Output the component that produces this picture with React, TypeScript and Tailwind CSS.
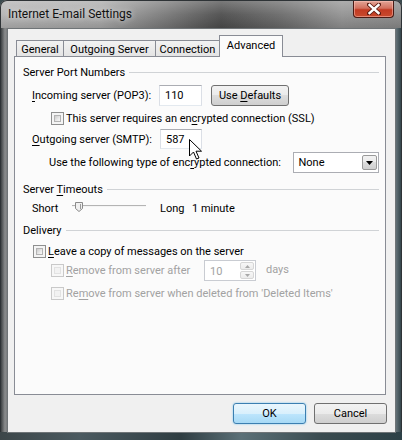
import React from "react";

function Key({ children }: { children: React.ReactNode }) {
  return <span className="underline underline-offset-[2px] decoration-[1px]">{children}</span>;
}

function Checkbox({ disabled }: { disabled?: boolean }) {
  return (
    <span
      className={`flex w-[13px] h-[13px] shrink-0 border p-[2px] ${
        disabled ? "border-[#c9c9c9] bg-[#f7f7f7]" : "border-[#8e8f8f] bg-[#f4f4f4]"
      }`}
    >
      <span
        className={`block w-full h-full border ${
          disabled
            ? "border-[#e2e2e2] bg-[#f2f2f2]"
            : "border-[#b3b3b3] bg-[linear-gradient(135deg,#cbcbcb_0%,#e9e9e9_60%,#f8f8f8_100%)]"
        }`}
      />
    </span>
  );
}

function GroupHeading({ children, mt }: { children: React.ReactNode; mt: string }) {
  return (
    <div className={`flex items-center h-[16px] ${mt}`}>
      <span>{children}</span>
      <span className="flex-1 h-px bg-[#d0d3d6] ml-[4px]" />
    </div>
  );
}

function TextBox({ value, w }: { value: string; w: string }) {
  return (
    <div
      className={`${w} h-full bg-white border border-[#abadb3] border-l-[#dbdfe6] border-r-[#dbdfe6] border-b-[#e3e9ef] flex items-center pl-[5px]`}
    >
      {value}
    </div>
  );
}

function Tab({ label, w, selected }: { label: string; w: string; selected?: boolean }) {
  if (selected) {
    return (
      <div
        className={`${w} h-[22px] -mb-px relative z-10 -ml-px border border-b-0 border-[#898c95] bg-[#fbfbfb] flex items-start justify-center pt-[4px]`}
      >
        {label}
      </div>
    );
  }
  return (
    <div
      className={`${w} h-[16px] -ml-px first:ml-0 border border-b-0 border-[#898c95] bg-[linear-gradient(#f2f2f2,#e4e4e4)] flex items-center justify-center pt-[1px]`}
    >
      {label}
    </div>
  );
}

function PushButton({ children, primary, w }: { children: React.ReactNode; primary?: boolean; w: string }) {
  return (
    <div
      className={`${w} h-[21px] rounded-[3px] border flex items-center justify-center ${
        primary
          ? "border-[#3c7fb1] bg-[linear-gradient(#eaf6fd_0%,#d9f0fc_50%,#bee6fd_50%,#a7d9f5_100%)] shadow-[0_0_2px_#6fc3ee]"
          : "border-[#707070] bg-[linear-gradient(#f2f2f2_0%,#ebebeb_50%,#dddddd_50%,#cfcfcf_100%)]"
      }`}
    >
      <span>{children}</span>
    </div>
  );
}

function Slider() {
  return (
    <svg width="76" height="16" viewBox="0 0 76 16" className="block">
      <line x1="0" y1="5.5" x2="74" y2="5.5" stroke="#b4b4b4" strokeWidth="1" />
      <line x1="0" y1="6.5" x2="74" y2="6.5" stroke="#f4f4f4" strokeWidth="1" />
      <path d="M3.5 2.5 H10.5 V8.5 L7 11.5 L3.5 8.5 Z" fill="#f0f0f0" stroke="#8a8a8a" strokeWidth="1" />
      <line x1="8.5" y1="4" x2="8.5" y2="9" stroke="#9a9a9a" strokeWidth="1" />
    </svg>
  );
}

function Cursor() {
  return (
    <svg width="14" height="22" viewBox="0 0 14 22" className="absolute left-[189px] top-[139px] z-30">
      <path
        d="M0.5 0.5 V17 L4.5 13 L7.5 20 L10 19 L7 12.2 L12.5 12.2 Z"
        fill="#ffffff"
        stroke="#000000"
        strokeWidth="1"
        strokeLinejoin="miter"
      />
    </svg>
  );
}

export default function App() {
  return (
    <div className="w-[402px] h-[440px] relative overflow-hidden whitespace-nowrap bg-[#3a4a4e] font-['Roboto',sans-serif] text-[11px] leading-none text-black">
      {/* glass frame */}
      <div className="absolute inset-0 rounded-t-[7px] border border-[#2e3336] bg-[linear-gradient(90deg,#3e4244_0%,#8a8c8d_1%,#6a6d6f_2%,#50575a_3%,#5d6062_50%,#4d5254_97%,#6c7a80_98.5%,#36474d_100%)]" />
      <div className="absolute left-0 right-0 bottom-0 h-[8px] bg-[linear-gradient(90deg,#3c4649_0%,#4b5a60_20%,#2f3d42_45%,#5b7077_60%,#3a4b50_80%,#2d4147_100%)]" />
      <div className="relative h-full flex flex-col">
        {/* title bar */}
        <div className="relative h-[28px] shrink-0 rounded-t-[7px] bg-[linear-gradient(90deg,#b3b3b3_0%,#a9a9a9_25%,#7c7c7c_40%,#4d4d4d_55%,#6b6b6b_70%,#929292_85%,#8a8a8a_100%)]">
          <div className="absolute inset-0 rounded-t-[7px] border border-b-0 border-[#2e3336] bg-[linear-gradient(180deg,rgba(255,255,255,0.25)_0%,rgba(255,255,255,0.05)_50%,rgba(0,0,0,0.12)_100%)]" />
          <div className="absolute left-[8px] top-[8px] text-[12px] text-[#111] [text-shadow:0_0_6px_rgba(255,255,255,0.8)]">
            Internet E-mail Settings
          </div>
          {/* close button */}
          <div className="absolute left-[353px] top-px w-[41px] h-[17px] rounded-b-[4px] border border-t-0 border-[#4a1a14] bg-[linear-gradient(#e3a597_0%,#d2705e_45%,#c23a22_55%,#c84a2e_100%)] flex items-center justify-center shadow-[inset_0_0_0_1px_rgba(255,200,190,0.5)]">
            <svg width="14" height="12" viewBox="0 0 14 12">
              <path d="M2 1.5 L12 10.5 M12 1.5 L2 10.5" stroke="#5a1a10" strokeWidth="4" strokeLinecap="square" />
              <path d="M2.5 2 L11.5 10 M11.5 2 L2.5 10" stroke="#ffffff" strokeWidth="2.4" strokeLinecap="square" />
            </svg>
          </div>
        </div>

        {/* client area */}
        <div className="ml-[7px] mr-[6px] mb-[7px] flex-1 bg-[#f0f0f0] border border-[#6f7477] flex flex-col pl-[6px] pr-[9px] pt-[6px]">
          {/* tab strip */}
          <div className="h-[21px] flex items-end pl-[2px] shrink-0">
            <Tab label="General" w="w-[48px]" />
            <Tab label="Outgoing Server" w="w-[93px]" />
            <Tab label="Connection" w="w-[65px]" />
            <Tab label="Advanced" w="w-[64px]" selected />
          </div>

          {/* tab page */}
          <div className="h-[339px] border border-[#898c95] bg-[#fbfbfb] pl-[8px] pr-[6px] flex flex-col shrink-0">
            <GroupHeading mt="mt-[7px]">Server Port Numbers</GroupHeading>

            <div className="flex items-center h-[21px] mt-[5px] pl-[9px]">
              <span className="w-[127px]">
                <Key>I</Key>ncoming server (POP3):
              </span>
              <TextBox value="110" w="w-[43px]" />
              <div className="ml-[9px] h-full">
                <PushButton w="w-[78px]">
                  Use <Key>D</Key>efaults
                </PushButton>
              </div>
            </div>

            <div className="flex items-center h-[14px] mt-[5px] pl-[28px] gap-[2px]">
              <Checkbox />
              <span>
                This server requires an en<Key>c</Key>rypted connection (SSL)
              </span>
            </div>

            <div className="flex items-center h-[20px] mt-[4px] pl-[9px]">
              <span className="w-[128px]">
                <Key>O</Key>utgoing server (SMTP):
              </span>
              <TextBox value="587" w="w-[42px]" />
            </div>

            <div className="flex items-center h-[21px] mt-[3px] pl-[26px]">
              <span className="w-[249px]">
                Use the following type of enc<Key>r</Key>ypted connection:
              </span>
              <div className="w-[87px] h-full bg-white border border-[#abadb3] flex items-center pl-[4px] pr-[1px]">
                <span className="flex-1">None</span>
                <div className="w-[15px] h-[15px] border border-[#9a9a9a] rounded-[2px] bg-[linear-gradient(#f2f2f2_0%,#ebebeb_50%,#dddddd_50%,#cfcfcf_100%)] flex items-center justify-center">
                  <svg width="7" height="4" viewBox="0 0 7 4">
                    <path d="M0 0 H7 L3.5 4 Z" fill="#000" />
                  </svg>
                </div>
              </div>
            </div>

            <GroupHeading mt="mt-[8px]">
              Server <Key>T</Key>imeouts
            </GroupHeading>

            <div className="flex items-center h-[16px] mt-[3px] pl-[9px]">
              <span className="w-[40px]">Short</span>
              <Slider />
              <span className="ml-[12px] w-[32px]">Long</span>
              <span>1 minute</span>
            </div>

            <GroupHeading mt="mt-[6px]">Delivery</GroupHeading>

            <div className="flex items-center h-[14px] mt-[6px] pl-[10px] gap-[2px]">
              <Checkbox />
              <span>
                <Key>L</Key>eave a copy of messages on the server
              </span>
            </div>

            <div className="flex items-center h-[21px] mt-[2px] pl-[28px] text-[#a2a2a2]">
              <Checkbox disabled />
              <span className="ml-[2px] w-[138px]">
                <Key>R</Key>emove from server after
              </span>
              <div className="w-[52px] h-full bg-white border border-[#c9ccd2] flex">
                <span className="flex-1 flex items-center pl-[5px] pt-[2px]">10</span>
                <div className="w-[16px] flex flex-col p-px gap-px">
                  <div className="flex-1 border border-[#d6d6d6] rounded-[2px] bg-[linear-gradient(#f7f7f7,#ececec)] flex items-center justify-center">
                    <svg width="5" height="3" viewBox="0 0 5 3">
                      <path d="M0 3 H5 L2.5 0 Z" fill="#a8a8a8" />
                    </svg>
                  </div>
                  <div className="flex-1 border border-[#d6d6d6] rounded-[2px] bg-[linear-gradient(#f7f7f7,#ececec)] flex items-center justify-center">
                    <svg width="5" height="3" viewBox="0 0 5 3">
                      <path d="M0 0 H5 L2.5 3 Z" fill="#a8a8a8" />
                    </svg>
                  </div>
                </div>
              </div>
              <span className="ml-[10px] -mt-[2px]">days</span>
            </div>

            <div className="flex items-center h-[14px] mt-[5px] pl-[28px] gap-[2px] text-[#a2a2a2]">
              <Checkbox disabled />
              <span>
                Re<Key>m</Key>ove from server when deleted from 'Deleted Items'
              </span>
            </div>
          </div>

          {/* dialog buttons */}
          <div className="flex justify-end gap-[8px] mt-[8px] -mr-px">
            <PushButton primary w="w-[73px]">
              OK
            </PushButton>
            <PushButton w="w-[73px]">Cancel</PushButton>
          </div>
        </div>
      </div>
      <Cursor />
    </div>
  );
}
